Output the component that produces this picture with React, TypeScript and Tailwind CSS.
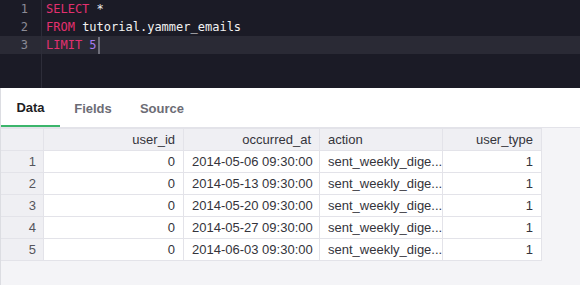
import React from 'react';

const rows = [
  { id: 1, user: '0', at: '2014-05-06 09:30:00', action: 'sent_weekly_dige...', type: '1' },
  { id: 2, user: '0', at: '2014-05-13 09:30:00', action: 'sent_weekly_dige...', type: '1' },
  { id: 3, user: '0', at: '2014-05-20 09:30:00', action: 'sent_weekly_dige...', type: '1' },
  { id: 4, user: '0', at: '2014-05-27 09:30:00', action: 'sent_weekly_dige...', type: '1' },
  { id: 5, user: '0', at: '2014-06-03 09:30:00', action: 'sent_weekly_dige...', type: '1' },
];

const Editor: React.FC = () => {
  const lines = [
    <><span className="text-[#e3306f]">SELECT</span> <span className="text-[#f2f2f2]">*</span></>,
    <><span className="text-[#e3306f]">FROM</span> <span className="text-[#f2f2f2]">tutorial.yammer_emails</span></>,
    <><span className="text-[#e3306f]">LIMIT</span> <span className="text-[#a77bf0]">5</span><span className="inline-block w-[2px] h-[17px] bg-[#6e6e7a] align-middle ml-[1px]" /></>,
  ];
  return (
    <div className="h-[88px] bg-[#1b1b26] flex" style={{ fontFamily: '"DejaVu Sans Mono", monospace' }}>
      <div className="w-[42px] border-r border-[#2d2d39] flex flex-col">
        {lines.map((_, i) => (
          <div key={i} className={`h-[18px] leading-[18px] text-[12px] text-[#8b8b96] text-right pr-[13px] ${i === 2 ? 'bg-[#2a2a35]' : ''}`}>
            {i + 1}
          </div>
        ))}
      </div>
      <div className="flex-1 flex flex-col">
        {lines.map((l, i) => (
          <div key={i} className={`h-[18px] leading-[18px] text-[12px] pl-[4px] whitespace-pre ${i === 2 ? 'bg-[#2a2a35]' : ''}`}>
            {l}
          </div>
        ))}
      </div>
    </div>
  );
};

const Tabs: React.FC = () => (
  <div className="h-[40px] bg-white border-b border-[#e3e3e9] flex items-end text-[13px] font-semibold">
    <div className="w-[59px] h-full flex items-center justify-center border-b-2 border-[#3bb56b] text-[#1e1e24] pt-[2px]">Data</div>
    <div className="w-[66px] h-full flex items-center justify-center text-[#6c6c75] pt-[2px]">Fields</div>
    <div className="w-[72px] h-full flex items-center justify-center text-[#6c6c75] pt-[2px]">Source</div>
  </div>
);

const cell = 'h-[21px] leading-[21px] px-[8px] text-[13px] text-[#34343b] whitespace-nowrap overflow-hidden';

const Grid: React.FC = () => (
  <div className="flex-1 bg-[#f4f4f7]">
    <div className="inline-grid grid-cols-[42px_139px_135px_122px_98px] gap-px bg-[#e3e3e9] pt-px pr-px pb-px">
      <div className={`${cell} bg-[#efeff3]`} />
      <div className={`${cell} bg-[#efeff3] text-right`}>user_id</div>
      <div className={`${cell} bg-[#efeff3] text-right`}>occurred_at</div>
      <div className={`${cell} bg-[#efeff3]`}>action</div>
      <div className={`${cell} bg-[#efeff3] text-right`}>user_type</div>
      {rows.map(r => (
        <React.Fragment key={r.id}>
          <div className={`${cell} bg-[#efeff3] text-right text-[#55555c] pr-[7px]`}>{r.id}</div>
          <div className={`${cell} bg-white text-right`}>{r.user}</div>
          <div className={`${cell} bg-white`}>{r.at}</div>
          <div className={`${cell} bg-white`}>{r.action}</div>
          <div className={`${cell} bg-white text-right`}>{r.type}</div>
        </React.Fragment>
      ))}
    </div>
  </div>
);

export default function App() {
  return (
    <div className="w-[580px] h-[285px] flex flex-col overflow-hidden" style={{ fontFamily: '"Liberation Sans", Arial, sans-serif' }}>
      <Editor />
      <div className="flex-1 flex flex-col border-l border-[#dcdde2]">
        <Tabs />
        <Grid />
      </div>
    </div>
  );
}
